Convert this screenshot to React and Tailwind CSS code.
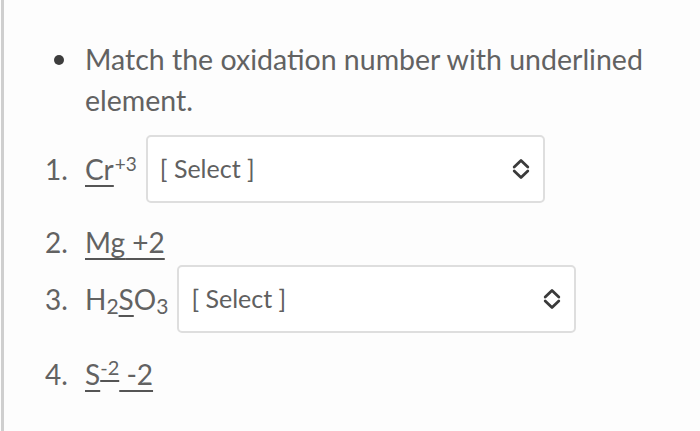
import React from "react";

function Chevrons() {
  return (
    <svg width="18" height="22" viewBox="0 0 18 22" className="shrink-0">
      <polyline points="2.2,9 9,2.5 15.8,9" fill="none" stroke="#3a3a3a" strokeWidth="2.8" strokeLinecap="round" strokeLinejoin="round" />
      <polyline points="2.2,13 9,19.5 15.8,13" fill="none" stroke="#3a3a3a" strokeWidth="2.8" strokeLinecap="round" strokeLinejoin="round" />
    </svg>
  );
}

function SelectBox({ className }) {
  return (
    <div className={"flex h-[68px] w-[399px] shrink-0 items-center justify-between rounded-[5px] border-2 border-[#dedede] bg-white pl-[12px] pr-[13px] " + className}>
      <span className="text-[25px] text-[#606060]">[ Select ]</span>
      <Chevrons />
    </div>
  );
}

const U = "underline decoration-[#555] decoration-2 underline-offset-[5px]";

export default function App() {
  return (
    <div className="h-[431px] w-[700px] overflow-hidden bg-[#fdfdfd] font-['Lato','Liberation_Sans',sans-serif] text-[#626262]">
      <div className="flex h-full">
        <div className="w-[3px] shrink-0 bg-[#cfcfcf] ml-[1px]" />
        <div className="flex flex-col">
          <div className="mt-[39px] flex">
            <div className="ml-[50px] mt-[16px] h-[10px] w-[10px] shrink-0 rounded-full bg-[#3d3d3d]" />
            <p className="ml-[21px] w-[600px] text-[28.5px] leading-[41px]">
              Match the oxidation number with underlined element.
            </p>
          </div>

          <div className="mt-[14px] flex h-[68px] items-center text-[28px]">
            <span className="ml-[41px] w-[40px]">1.</span>
            <span>
              <span className={U}>Cr</span>
              <span className="relative top-[-9px] ml-[1px] text-[19px]">+3</span>
            </span>
            <SelectBox className="ml-[9px]" />
          </div>

          <div className="mt-[19px] flex h-[40px] items-center text-[28px]">
            <span className="ml-[41px] w-[40px]">2.</span>
            <span>
              <span className={U}>Mg</span>
              <span className={U}>{"\u00a0+2"}</span>
            </span>
          </div>

          <div className="mt-[3px] flex h-[68px] items-center text-[28px]">
            <span className="ml-[41px] w-[40px]">3.</span>
            <span>
              H<sub className="text-[21px] relative bottom-[-4px]">2</sub>
              <span className={U}>S</span>
              O<sub className="text-[21px] relative bottom-[-4px]">3</sub>
            </span>
            <SelectBox className="ml-[9px]" />
          </div>

          <div className="mt-[21px] flex h-[40px] items-center text-[28px]">
            <span className="ml-[41px] w-[40px]">4.</span>
            <span>
              <span className={U}>S</span>
              <sup className={"text-[20px] " + U}>-2</sup>
              <span className={U}>{"\u00a0-2"}</span>
            </span>
          </div>
        </div>
      </div>
    </div>
  );
}
